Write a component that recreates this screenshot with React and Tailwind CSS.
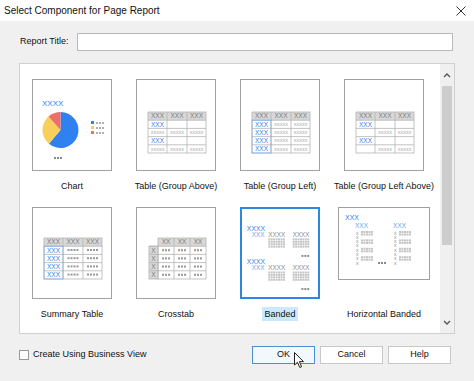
import React from 'react';

const BLUE = '#2f7fe8';
const LBLUE = '#6aa8f0';
const GRID = '#b4b4b4';
const HEAD = '#d8d8d8';
const TXT = '#8a8a8a';

function T({ x, y, c = TXT, s = 6.5, children, anchor = 'start' }) {
    return (
        <text x={x} y={y} fill={c} fontSize={s} fontFamily="Liberation Sans, sans-serif" textAnchor={anchor}>
            {children}
        </text>
    );
}

// small row of squares for the "###" data cells
function Dots({ x, y, n = 4, c = '#9a9a9a' }) {
    return (
        <g>
            {Array.from({ length: n }).map((_, i) => (
                <rect key={i} x={x + i * 3} y={y} width="2" height="2" fill={c} />
            ))}
        </g>
    );
}

function Block({ x, y, w = 18, h = 11 }) {
    const cells = [];
    for (let r = 0; r < Math.floor(h / 2.5); r++) {
        for (let c = 0; c < Math.floor(w / 2.5); c++) {
            cells.push(<rect key={r + '-' + c} x={x + c * 2.5} y={y + r * 2.5} width="2" height="2" fill="#c4c4c4" />);
        }
    }
    return <g>{cells}</g>;
}

function GridTable({ x = 11, y = 32, w = 58, rows, cols = [19, 20, 19], leftBlue = false }) {
    const rh = 8.2;
    const h = rh * (rows.length + 1);
    const xs = [x, x + cols[0], x + cols[0] + cols[1], x + w];
    return (
        <g>
            <rect x={x} y={y} width={w} height={rh} fill={HEAD} />
            <rect x={x} y={y} width={w} height={h} fill="none" stroke={GRID} strokeWidth="0.8" />
            {[1, 2].map(i => (
                <line key={i} x1={xs[i]} y1={y} x2={xs[i]} y2={y + h} stroke={GRID} strokeWidth="0.8" />
            ))}
            {rows.map((_, i) => (
                <line key={i} x1={x} y1={y + rh * (i + 1)} x2={x + w} y2={y + rh * (i + 1)} stroke={GRID} strokeWidth="0.8" />
            ))}
            {leftBlue && <rect x={x} y={y + rh} width={cols[0]} height={h - rh} fill="none" stroke="#7fb0f0" strokeWidth="0.8" />}
            {[0, 1, 2].map(i => (
                <T key={i} x={(xs[i] + xs[i + 1]) / 2} y={y + 6.3} anchor="middle" c="#7a7a7a">XXX</T>
            ))}
            {rows.map((r, i) => (
                <g key={i}>
                    {r.map((cell, j) => {
                        const cx = (xs[j] + xs[j + 1]) / 2;
                        const cy = y + rh * (i + 1) + 6.3;
                        if (cell === 'B') return <T key={j} x={cx} y={cy} anchor="middle" c={BLUE}>XXX</T>;
                        if (cell === 'x') return <T key={j} x={cx} y={cy - 0.5} anchor="middle" s={5.5} c="#a8a8a8">xxxxx</T>;
                        if (cell === '#') return <Dots key={j} x={cx - 5.5} y={cy - 3.5} />;
                        return null;
                    })}
                </g>
            ))}
        </g>
    );
}

function ChartThumb() {
    const cx = 27.5, cy = 50, r = 18;
    const pt = (deg) => {
        const a = (deg - 90) * Math.PI / 180;
        return [cx + r * Math.cos(a), cy + r * Math.sin(a)];
    };
    const arc = (a0, a1, color) => {
        const [x0, y0] = pt(a0);
        const [x1, y1] = pt(a1);
        const large = a1 - a0 > 180 ? 1 : 0;
        return <path d={`M${cx} ${cy} L${x0} ${y0} A${r} ${r} 0 ${large} 1 ${x1} ${y1} Z`} fill={color} />;
    };
    return (
        <g>
            <T x={9} y={26} c={BLUE} s={8}>XXXX</T>
            {arc(0, 220, '#2f80f0')}
            {arc(220, 318, '#f7cf5a')}
            {arc(318, 360, '#ec6f6a')}
            <rect x={58} y={41} width="3" height="3" fill="#2f80f0" />
            <rect x={58} y={46} width="3" height="3" fill="#f7cf5a" />
            <rect x={58} y={51} width="3" height="3" fill="#ec6f6a" />
            <Dots x={63} y={42} n={3} c="#b0b0b0" />
            <Dots x={63} y={47} n={3} c="#b0b0b0" />
            <Dots x={63} y={52} n={3} c="#b0b0b0" />
            <Dots x={21} y={77} n={3} c="#8a8a8a" />
        </g>
    );
}

function CrosstabThumb() {
    const x = 12, y = 30, rh = 8.2;
    const hx = 21;
    const cw = 16;
    return (
        <g>
            <rect x={hx} y={y} width={cw * 3} height={rh} fill={HEAD} />
            <rect x={x} y={y + rh} width={hx - x} height={rh * 4} fill={HEAD} />
            <rect x={hx} y={y} width={cw * 3} height={rh * 5} fill="none" stroke={GRID} strokeWidth="0.8" />
            <rect x={x} y={y + rh} width={hx - x} height={rh * 4} fill="none" stroke={GRID} strokeWidth="0.8" />
            {[1, 2].map(i => (
                <line key={i} x1={hx + cw * i} y1={y} x2={hx + cw * i} y2={y + rh * 5} stroke={GRID} strokeWidth="0.8" />
            ))}
            {[1, 2, 3, 4].map(i => (
                <line key={i} x1={x} y1={y + rh * i} x2={hx + cw * 3} y2={y + rh * i} stroke={GRID} strokeWidth="0.8" />
            ))}
            {[0, 1, 2].map(i => (
                <T key={i} x={hx + cw * i + cw / 2} y={y + 6.3} anchor="middle" c="#7a7a7a">XX</T>
            ))}
            {[0, 1, 2, 3].map(r => (
                <g key={r}>
                    <T x={(x + hx) / 2} y={y + rh * (r + 1) + 6.3} anchor="middle" c="#7a7a7a">X</T>
                    {[0, 1, 2].map(c => (
                        <Dots key={c} x={hx + cw * c + 4} y={y + rh * (r + 1) + 3} n={3} />
                    ))}
                </g>
            ))}
        </g>
    );
}

function BandedThumb() {
    const band = (oy) => (
        <g>
            <T x={6} y={oy + 23} c={BLUE} s={7}>XXXX</T>
            <T x={11} y={oy + 29.5} c={LBLUE} s={6.5}>XXX</T>
            <T x={28} y={oy + 29.5} s={6.5} c="#8a8a8a">XXXX</T>
            <T x={53} y={oy + 29.5} s={6.5} c="#8a8a8a">XXXX</T>
            <Block x={28} y={oy + 31} w={19} h={12} />
            <Block x={53} y={oy + 31} w={19} h={12} />
            <Dots x={62} y={oy + 48} n={3} c="#8a8a8a" />
        </g>
    );
    return (
        <g>
            {band(0)}
            {band(34)}
        </g>
    );
}

function HBandedThumb() {
    const group = (ox) => (
        <g>
            <T x={ox} y={20} c={LBLUE} s={6.5}>XXX</T>
            <text x={ox + 1} y={26.5} fill="#7a7a7a" fontSize="3.8" fontFamily="Liberation Sans, sans-serif">
                {[0, 1, 2, 3, 4, 5, 6, 7].map(i => (
                    <tspan key={i} x={ox + 1} dy={i === 0 ? 0 : 4.3}>X</tspan>
                ))}
            </text>
            {[0, 1, 2, 3].map(i => (
                <Block key={i} x={ox + 6} y={23 + i * 8.4} w={14} h={7} />
            ))}
        </g>
    );
    return (
        <g>
            <T x={6} y={12} c={BLUE} s={7}>XXX</T>
            {group(16)}
            {group(54)}
            <Dots x={39} y={54} n={3} c="#8a8a8a" />
        </g>
    );
}

function Tile({ label, selected, wide, children }) {
    return (
        <div className="flex flex-col items-center">
            <div className="h-[92px] flex items-start justify-center">
                <div
                    className={
                        wide
                            ? 'w-[92px] h-[73px] bg-white border border-[#a0a0a0]'
                            : selected
                                ? 'w-[80px] h-[92px] bg-white border-2 border-[#2b8ae0]'
                                : 'w-[80px] h-[92px] bg-white border border-[#a0a0a0]'
                    }
                >
                    <svg width="100%" height="100%" viewBox={wide ? '0 0 90 71' : selected ? '1 1 78 90' : '0 0 78 90'}>
                        {children}
                    </svg>
                </div>
            </div>
            <div className="mt-[7px] h-[16px] flex items-center whitespace-nowrap">
                <span className={selected ? 'px-[2px] bg-[#cce8ff] leading-[14px]' : 'leading-[14px]'}>{label}</span>
            </div>
        </div>
    );
}

export default function App() {
    return (
        <div
            className="w-[474px] h-[381px] flex flex-col bg-[#f0f0f0] text-[9px] text-[#111] overflow-hidden relative"
            style={{ fontFamily: '"Liberation Sans", Arial, sans-serif' }}
        >
            {/* title bar */}
            <div className="h-[21px] shrink-0 bg-white flex items-center justify-between pl-[4px] pr-[8px]">
                <span className="text-[10px] whitespace-nowrap">Select Component for Page Report</span>
                <svg width="10" height="10" viewBox="0 0 10 10">
                    <path d="M0.5 0.5 L9.5 9.5 M9.5 0.5 L0.5 9.5" stroke="#333" strokeWidth="1" />
                </svg>
            </div>

            {/* report title */}
            <div className="flex items-center mt-[12px] pl-[20px]">
                <span className="w-[57px] whitespace-nowrap">Report Title:</span>
                <div className="w-[376px] h-[18px] bg-white border border-[#b9b9b9]"></div>
            </div>

            {/* component list */}
            <div className="ml-[19px] mt-[12px] w-[436px] h-[271px] shrink-0 bg-white border border-[#d0d0d0] flex">
                <div className="flex-1 pt-[15px]">
                    <div className="grid grid-cols-4 w-[416px] gap-y-[13px]">
                        <Tile label="Chart"><ChartThumb /></Tile>
                        <Tile label="Table (Group Above)">
                            <GridTable rows={[['B', '', ''], ['x', 'x', 'x'], ['B', '', ''], ['x', 'x', 'x']]} />
                        </Tile>
                        <Tile label="Table (Group Left)">
                            <GridTable leftBlue rows={[['B', 'x', 'x'], ['B', 'x', 'x'], ['B', 'x', 'x'], ['B', 'x', 'x']]} />
                        </Tile>
                        <Tile label="Table (Group Left Above)">
                            <GridTable rows={[['B', '', ''], ['', 'x', 'x'], ['B', '', ''], ['', 'x', 'x']]} />
                        </Tile>
                        <Tile label="Summary Table">
                            <GridTable leftBlue y={30} rows={[['B', '#', '#'], ['B', '#', '#'], ['B', '#', '#'], ['B', '#', '#']]} />
                        </Tile>
                        <Tile label="Crosstab"><CrosstabThumb /></Tile>
                        <Tile label="Banded" selected><BandedThumb /></Tile>
                        <Tile label="Horizontal Banded" wide><HBandedThumb /></Tile>
                    </div>
                </div>
                {/* scrollbar */}
                <div className="w-[14px] bg-[#f0f0f0] flex flex-col items-center">
                    <div className="h-[22px] flex items-center justify-center">
                        <svg width="8" height="5" viewBox="0 0 8 5">
                            <path d="M1 4 L4 1 L7 4" stroke="#555" strokeWidth="1.3" fill="none" />
                        </svg>
                    </div>
                    <div className="w-[10px] h-[159px] bg-[#cdcdcd]"></div>
                    <div className="flex-1"></div>
                    <div className="h-[22px] flex items-center justify-center">
                        <svg width="8" height="5" viewBox="0 0 8 5">
                            <path d="M1 1 L4 4 L7 1" stroke="#555" strokeWidth="1.3" fill="none" />
                        </svg>
                    </div>
                </div>
            </div>

            {/* footer */}
            <div className="flex items-start mt-[12px] pl-[19px] pr-[23px]">
                <div className="flex items-center gap-[4px] mt-[2px]">
                    <div className="w-[10px] h-[10px] bg-white border border-[#9a9a9a]"></div>
                    <span className="whitespace-nowrap">Create Using Business View</span>
                </div>
                <div className="flex-1"></div>
                <div className="flex gap-[5px]">
                    <button className="w-[63px] h-[18px] bg-[#f3f8fd] border border-[#4a90d9] text-[9px]">OK</button>
                    <button className="w-[63px] h-[18px] bg-white border border-[#c8c8c8] text-[9px]">Cancel</button>
                    <button className="w-[63px] h-[18px] bg-white border border-[#c8c8c8] text-[9px]">Help</button>
                </div>
            </div>

            {/* mouse cursor */}
            <svg className="absolute left-[294px] top-[352px]" width="11" height="17" viewBox="0 0 11 17">
                <path d="M0.5 0.5 L0.5 13 L3.5 10.3 L5.8 15.5 L7.6 14.7 L5.4 9.6 L9.5 9.6 Z" fill="white" stroke="#222" strokeWidth="1" />
            </svg>
        </div>
    );
}
